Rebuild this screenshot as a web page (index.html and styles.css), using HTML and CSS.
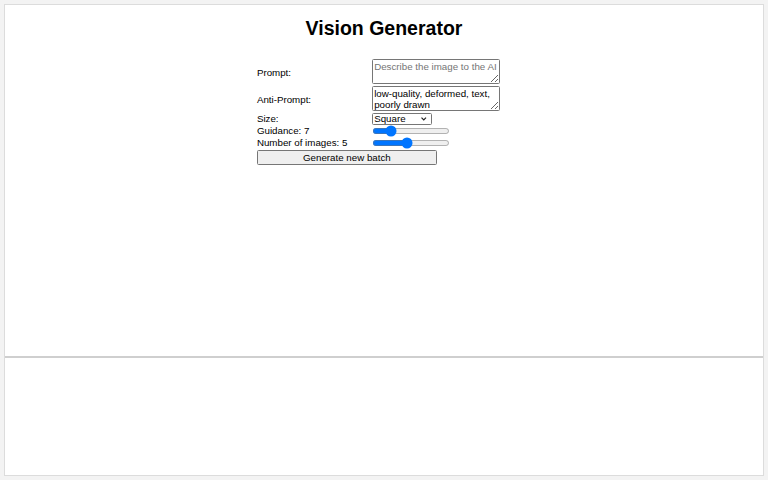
FILE: index.html
```html
<!DOCTYPE html>
<html>
<head>
<meta charset="utf-8">
<link rel="stylesheet" href="styles.css">
</head>
<body>
<div class="frame">
  <div class="top">
    <div class="scaled">
      <h1 class="title">Vision Generator</h1>
      <div class="form">
        <label class="lbl">Prompt:</label>
        <div class="cell"><textarea class="ta" placeholder="Describe the image to the AI"></textarea></div>
        <label class="lbl">Anti-Prompt:</label>
        <div class="cell"><textarea class="ta">low-quality, deformed, text, poorly drawn</textarea></div>
        <label class="lbl">Size:</label>
        <div class="cell row">
          <div class="selwrap">
            <select class="sel"><option>Square</option><option>Portrait</option><option>Landscape</option></select>
            <svg class="chev" width="10" height="10" viewBox="0 0 10 10"><path d="M2 3.5 L5 6.5 L8 3.5" fill="none" stroke="#222" stroke-width="1.6"/></svg>
          </div>
        </div>
        <label class="lbl">Guidance: 7</label>
        <div class="cell row"><input class="rng" type="range" min="1" max="30" value="7"></div>
        <label class="lbl">Number of images: 5</label>
        <div class="cell row"><input class="rng" type="range" min="1" max="10" value="5"></div>
        <button class="btn">Generate new batch</button>
      </div>
    </div>
  </div>
  <div class="bottom"></div>
</div>
</body>
</html>
```
FILE: styles.css
```css
html, body {
  margin: 0;
  padding: 0;
  height: 100%;
}
body {
  background: #f3f3f3;
  font-family: "Liberation Sans", Arial, sans-serif;
  padding: 4px;
  box-sizing: border-box;
}
.frame {
  height: 100%;
  background: #fff;
  border: 1px solid #dcdcdc;
  box-sizing: border-box;
  display: flex;
  flex-direction: column;
}
.top {
  height: 353px;
  border-bottom: 2px solid #cfcfcf;
  box-sizing: border-box;
}
.bottom {
  flex: 1;
}
.scaled {
  zoom: 0.75;
}
.title {
  font-size: 26px;
  font-weight: bold;
  text-align: center;
  margin: 16px 0 0;
  line-height: 30px;
  color: #000;
}
.form {
  width: 339px;
  margin: 26px auto 0;
  display: grid;
  grid-template-columns: 153px 186px;
  align-items: center;
  font-size: 13px;
  color: #000;
}
.lbl {
  line-height: 16px;
}
.cell {
  display: flex;
  align-items: center;
}
.row {
  height: 16px;
}
.ta {
  display: block;
  width: 171px;
  height: 33px;
  box-sizing: border-box;
  font-family: "Liberation Sans", Arial, sans-serif;
  font-size: 13px;
  line-height: 15px;
  padding: 1px 2px;
  margin: 0 0 3px;
  border: 1px solid #767676;
  border-radius: 2px;
  resize: vertical;
  overflow: hidden;
  color: #000;
}
.ta::placeholder {
  color: #757575;
}
.selwrap {
  width: 81px;
  height: 17px;
  box-sizing: border-box;
  border: 1px solid #767676;
  border-radius: 2px;
  display: flex;
  align-items: center;
  background: #fff;
}
.sel {
  appearance: none;
  -webkit-appearance: none;
  border: none;
  outline: none;
  background: transparent;
  flex: 1;
  min-width: 0;
  height: 15px;
  font-family: "Liberation Sans", Arial, sans-serif;
  font-size: 13px;
  line-height: 15px;
  padding: 0 0 0 2px;
  margin: 0;
  color: #000;
}
.chev {
  flex: none;
  margin-right: 5px;
}
.rng {
  width: 104px;
  margin: 0;
}
.btn {
  grid-column: 1 / 3;
  width: 240px;
  height: 20px;
  padding: 0;
  margin-top: 1px;
  font-family: "Liberation Sans", Arial, sans-serif;
  font-size: 13px;
  color: #000;
  background: #efefef;
  border: 1px solid #767676;
  border-radius: 2px;
}
```
